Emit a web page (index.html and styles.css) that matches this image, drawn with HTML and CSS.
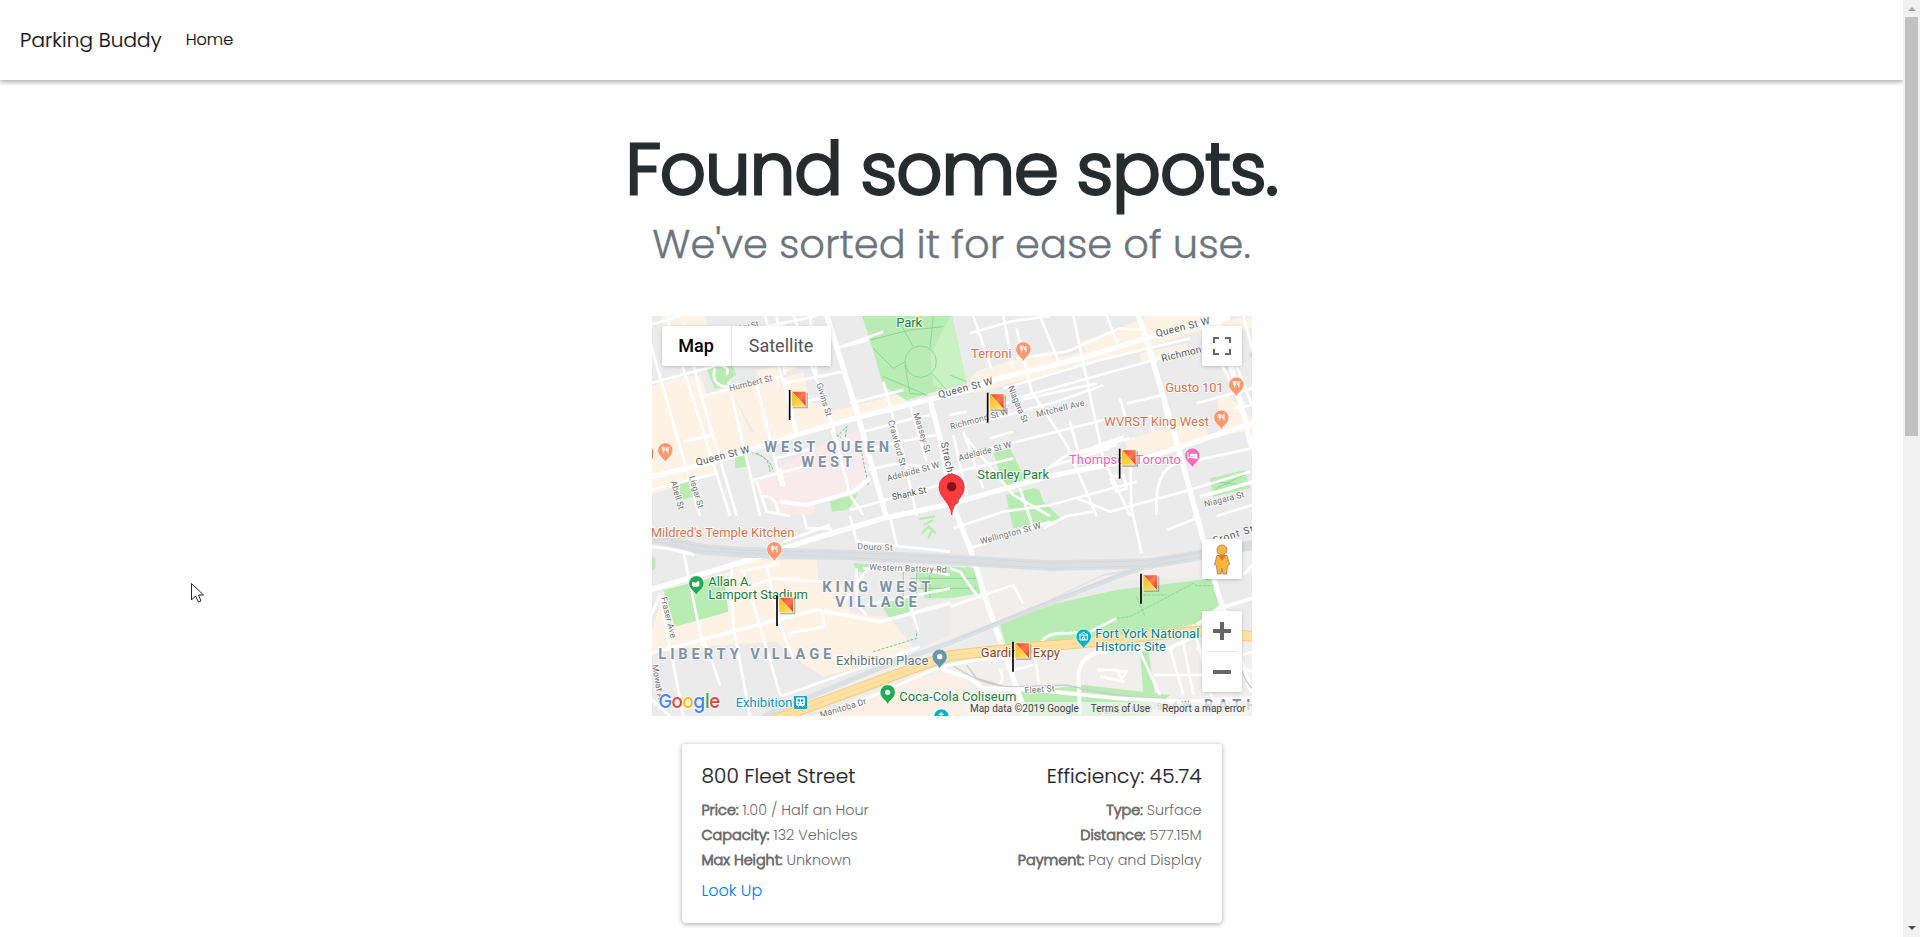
FILE: index.html
```html
<!DOCTYPE html>
<html lang="en">
  <head>
    <meta charset="utf-8">
    <title>Parking Buddy</title>
    <link rel="stylesheet" href="styles.css">
  </head>
  <body>
    <div class="page">
      <nav class="navbar">
        <a class="navbar-brand" href="#">Parking Buddy</a>
        <a class="nav-link" href="#">Home</a>
      </nav>
      <main class="results">
        <h1 class="title">Found some spots.</h1>
        <h2 class="subtitle">We've sorted it for ease of use.</h2>

        <div class="map">
          <svg class="map-tiles" viewBox="6 3 1800 1200">
            <defs>
              <linearGradient id="red" x1="0" y1="0" x2="1" y2="1">
                <stop offset="0" stop-color="#e8402c"/><stop offset=".5" stop-color="#ff7a50"/><stop offset="1" stop-color="#dc3a25"/>
              </linearGradient>
              <linearGradient id="yellow" x1="0" y1="0" x2="1" y2="1">
                <stop offset="0" stop-color="#f5b524"/><stop offset="1" stop-color="#ffe75c"/>
              </linearGradient>
              <g id="flag">
                <path d="M9 8h46v47H9z" fill="#777" opacity=".5"/>
                <path d="M5 3H50V50H5z" fill="#fff3d0"/>
                <path d="M8 5H48V49z" fill="url(#red)"/>
                <path d="M7 5V48H47z" fill="url(#yellow)"/>
                <path d="M0 0V90" stroke="#000" stroke-width="5"/>
              </g>
              <path id="pin" d="M0 0C-3-14-23-20-23-38a23 23 0 0 1 46 0C23-20 3-14 0 0z" stroke="#fff" stroke-width="2"/>
              <g id="food">
                <use href="#pin" fill="#ff9771"/>
                <path d="M-9-49v8q0 4 4 4t4-4v-8M-5-49v20M8-29v-19q-5 1-5 11h5" fill="none" stroke="#fff" stroke-width="3"/>
              </g>
            </defs>

            <rect x="6" y="3" width="1800" height="1200" fill="#ebebeb"/>

            <!-- land use -->
            <g fill="#fdf2e3">
              <path d="M0 215L90 185 190 480 0 540zM75 190L150 180 235 430 160 450zM150 250L240 225 320 385 225 415zM230 210L390 185 430 345 330 380zM320 165L380 155 395 190 330 200zM400 190L460 170 480 260 560 290 600 275 615 300 440 345zM30 3L165 3 175 30 40 30zM365 40L405 20 440 160 400 175z"/>
              <path d="M0 485L190 440 450 360 625 312 770 280 765 235 700 250 440 315 190 385 195 470 0 520z"/>
              <path d="M980 168L1070 140 1160 125 1200 105 1210 130 1310 110 1290 80 1350 60 1470 15 1490 3 1710 3 1720 25 1450 110 1310 145 970 235 960 190zM1424 375L1660 310 1675 365 1440 430zM1470 115L1610 85 1620 120 1475 140zM1700 250L1735 240 1806 310 1806 345 1720 360zM1640 30L1806 3V40L1650 70z"/>
              <path d="M290 735L500 735 505 795 570 800 600 890 720 910 800 1010 520 1085 450 1040 380 980 0 1005V965L45 820 240 770z"/>
            </g>
            <g fill="#f9eaec">
              <path d="M380 455L560 370 630 345 660 485 625 530 500 560 490 600H390L340 540 320 495z"/>
            </g>
            <path d="M900 765L1250 740 1806 700V780L1350 800 900 1000 400 1203H330L700 1050 900 960zM910 1040L1150 1000 1806 980V1203H500L780 1080z" fill="#f1efee"/>
            <path d="M480 1203L700 1120 920 1060 960 1110 940 1203z" fill="#fbefe7"/>

            <g fill="#b8ecb2">
              <path d="M635 0H905L950 205 880 222 770 256 700 212 660 75z"/>
              <path d="M170 165L245 140 258 180 235 195 240 208 195 222z"/>
              <path d="M255 425L285 410 290 455 255 460zM90 505L125 500 130 545 90 555zM540 560L625 535 605 570 590 585 545 590z"/>
              <path d="M1030 415L1080 400 1110 460 1140 508 1060 520 1045 460zM1067 540L1150 520 1168 525 1180 560 1235 612 1185 622 1090 640 1078 590z"/>
              <path d="M1680 490L1785 465 1800 520 1690 545z"/>
              <path d="M40 825L220 780 235 890 75 935zM610 745L660 748 650 770 620 770zM800 772L900 755 980 760 990 835 900 850 825 850zM705 860L775 850 780 890 720 910 700 880z"/>
              <path d="M1050 925L1220 865 1400 825 1690 790 1708 868 1640 925 1500 960 1350 960 1200 985 1070 1000z"/>
              <path d="M1110 1130L1300 1110 1560 1140 1490 1203H1130zM1470 1010L1495 1005 1515 1140 1480 1140zM950 755L970 760 990 830 965 830z"/>
              <path d="M1805 130V110L1795 120zM0 770V720L16 730V760z"/>
            </g>
            <path d="M900 4L905 0 950 205 880 222 850 210 840 120z" fill="#c8f2c2"/>
            <g fill="none" stroke="#86cf90" stroke-width="2.5">
              <circle cx="812" cy="140" r="47"/>
              <path d="M660 75L780 45 880 35M670 100L730 160 765 140M840 100L850 3M765 150L780 235 830 240M700 185L830 240M845 175L890 225M740 3L770 60 790 95M900 180L950 200"/>
              <path d="M1400 910L1440 905 1630 805 1640 812 1690 812M1460 845L1485 905M1480 840H1550" stroke-dasharray="10 3"/>
              <path d="M560 365L590 335 585 375 560 360M630 390L655 510M670 1010L800 970V945M320 415Q360 430 360 475M290 410Q360 420 370 470" stroke-dasharray="8 5" stroke="#55bd6c"/>
              <path d="M760 770V850M800 770V850M840 780V850M780 790H990M770 820H980M1700 520L1780 480M1700 500L1770 510"/>
            </g>
            <path d="M808 612L855 605M820 630L850 615M815 655L835 635 858 655M835 670L848 640" fill="none" stroke="#b8ecb2" stroke-width="7"/>

            <!-- side streets -->
            <g fill="none" stroke="#fff" stroke-width="8" stroke-linejoin="round">
              <path d="M0 80L100 430 150 603M50 3L240 603M100 20L150 230 260 603M235 200L330 603M320 210L395 515M345 3L440 350M380 3L405 180M430 0L545 320 600 540 640 600M480 3L500 190M560 100L700 50M580 95L655 75M400 205L580 170M430 265L510 250M600 265L760 225"/>
              <path d="M0 205L170 160 330 115M0 30L90 3M150 245L390 185M300 45L500 3M700 200L760 420 800 603M780 270L830 440M640 350L790 310 840 300M655 465L740 445 870 460M310 495L480 450 490 400 375 430M665 400L750 380 860 360M600 585L870 510"/>
              <path d="M320 500L350 590 420 603M340 545Q380 540 385 600M390 460L403 515M0 525L200 475M545 345L560 400M575 365L610 385M100 380L190 360M190 150Q245 150 230 180M195 160Q180 210 230 215"/>
              <path d="M970 3L1025 165M1060 3L1090 160M1100 40L1145 230 1250 390 1340 603M1170 3L1230 150M1270 3L1360 430 1440 603M1370 0L1400 80M960 55L1080 20 1200 3M1100 130L1250 110 1410 40 1480 45M1060 220L1350 135 1620 70M1100 250L1600 110M1040 270L1340 205M980 325L1220 260 1360 210M1020 400L1360 315M1180 470L1250 420 1440 370M1260 320L1290 430M1330 395L1420 365M1290 415L1400 390M1200 455L1380 400"/>
              <path d="M1110 520L1150 640M1280 550L1380 590 1600 530 1800 470M1380 485L1420 480 1430 520 1400 530 1380 490M1440 400L1445 603M1500 300L1510 350M1430 265L1540 240M1410 250L1430 320M1540 265L1560 340M1600 440Q1510 450 1520 600M1640 265L1806 220M1620 440L1806 400M1700 603L1806 570M1780 3L1806 100M1650 30L1780 270M1700 3L1806 270M1750 280L1806 270"/>
              <path d="M950 370L1090 540 1200 603M1020 370L1090 350M900 300L950 290M910 360L950 540M940 350L1000 520M900 475L1090 430M910 640L1060 590 1200 570 1460 500M1180 640L1250 603 1330 590M1440 560L1475 715M1550 645L1640 610M1630 600L1650 635M960 700L1200 620"/>
              <path d="M0 910L30 840 100 1203M0 660L130 720 100 710 160 1000M245 760L250 935 300 1203M280 765L350 1000 390 1140M350 755L390 930 430 1030M270 770L390 745M300 815L370 790 520 800M415 955L525 935 515 890M165 980L210 1110M0 695L50 700 130 720M460 600L470 640 540 640 545 665M600 603L620 680 900 710M720 603L740 690M540 630L400 680M650 870L900 820M655 760L570 875M640 760L820 765 900 780"/>
              <path d="M780 870L805 950M390 1145L810 995M0 1150L60 1203M620 760L620 870 650 900M900 875L1090 810 1120 865M980 840L930 770 900 760"/>
              <path d="M1165 1000Q1180 950 1250 955L1320 950 1400 910M1150 990L1170 1130M1600 985L1630 1140M1560 1000L1600 1140M1470 1010L1530 1140M1510 1080H1720M1340 1065H1400L1420 1100 1350 1085M1380 1065L1430 1070 1410 1100M1050 1060Q1070 1110 1030 1110M1090 1065L1150 1050M1630 930L1700 1203M1720 1040L1806 1010M1640 1000L1806 1070M1780 780L1806 750"/>
            </g>

            <!-- main streets -->
            <g fill="none" stroke="#fff" stroke-width="16" stroke-linejoin="round">
              <path d="M0 487L200 438 440 360 620 308 850 250 960 225 1040 192 1300 128 1480 72 1740 5"/>
              <path d="M0 825L290 737 500 668 700 610 900 567 1200 483 1500 425 1806 325"/>
              <path d="M530 0L625 305 710 610M840 255L870 370 905 560 960 700 1010 860 1100 1120 1130 1203"/>
              <path d="M1465 0L1500 110 1580 380 1640 600 1700 820 1760 1010 1806 1130M1690 3L1745 160 1806 400"/>
              <path d="M1640 930L1710 880 1806 850M1810 500L1650 545" stroke-width="11"/>
              <path d="M0 1015L380 915 500 885 690 920 900 865M400 190L440 360" stroke-width="11"/>
              <path d="M390 560L470 570 610 530 660 490M1290 1200L1285 1080Q1290 1010 1390 1005L1560 1000 1660 950" stroke-width="12"/>
            </g>

            <!-- rail lines -->
            <g fill="none" stroke="#dcdfe1">
              <path d="M0 670L60 678 150 702 280 712 600 720 900 734 1200 752 1500 745 1640 722 1806 690" stroke-width="32"/>
              <path d="M1810 695L1550 735 1400 785 1150 882 900 983 700 1055 340 1203" stroke-width="15"/>
              <path d="M1500 755L1360 780 1170 870" stroke-width="4"/>
            </g>
            <g fill="none" stroke="#cfd4d8" stroke-width="2">
              <path d="M0 662L150 694 280 706 600 712 900 726 1200 744 1500 737 1806 682M0 676L150 708 600 728 900 742 1200 760 1500 753 1806 700M1806 690L1550 730 1400 782 1150 877 900 980"/>
            </g>
            <path d="M900 1045Q1000 1120 1100 1115L1250 1110Q1400 1150 1550 1150M1750 1010L1790 1100 1806 1120M950 1050L980 1090 1100 1125" fill="none" stroke="#c8cccf" stroke-width="4"/>

            <!-- expressway -->
            <g fill="none" stroke-linejoin="round">
              <path d="M370 1215L600 1130 800 1056 900 1022 1100 1000 1300 984 1500 962 1650 948 1806 964" stroke="#f7cc78" stroke-width="32"/>
              <path d="M370 1215L600 1130 800 1056 900 1022 1100 1000 1300 984 1500 962 1650 948 1806 964" stroke="#ffe1a3" stroke-width="26"/>
              <path d="M370 1215L600 1130 800 1056 900 1022 1100 1000 1300 984 1500 962" stroke="#fad88e" stroke-width="3"/>
              <path d="M520 1203L700 1130 860 1060 900 1050 980 1035 1130 1025" stroke="#fff" stroke-width="9"/>
              <path d="M870 1060L960 1090 1000 1120 1160 1125 1400 1150 1600 1160 1806 1150" stroke="#fff" stroke-width="12"/>
            </g>

            <!-- street names -->
            <g class="street">
              <text x="240" y="229" textLength="132" transform="rotate(-14 240 229)">Humbert St</text>
              <text x="258" y="52" textLength="70" transform="rotate(-14 258 44)">xley St</text>
              <text x="499" y="207" textLength="103" transform="rotate(73 499 207)">Givins St</text>
              <text x="714" y="318" textLength="142" transform="rotate(75 714 318)">Crawford St</text>
              <text x="790" y="296" textLength="124" transform="rotate(73 790 296)">Massey St</text>
              <text x="62" y="500" textLength="88" transform="rotate(74 62 500)">Abell St</text>
              <text x="117" y="485" textLength="100" transform="rotate(74 117 485)">Lisgar St</text>
              <text x="713" y="499" textLength="162" transform="rotate(-15 713 499)">Adelaide St W</text>
              <text x="728" y="555" textLength="105" transform="rotate(-12 728 555)" fill="#444">Shank St</text>
              <text x="903" y="344" textLength="180" transform="rotate(-15 903 344)">Richmond St W</text>
              <text x="1073" y="217" textLength="118" transform="rotate(67 1073 217)">Niagara St</text>
              <text x="1161" y="307" textLength="148" transform="rotate(-14 1161 307)">Mitchell Ave</text>
              <text x="928" y="438" textLength="163" transform="rotate(-15 928 438)">Adelaide St W</text>
              <text x="1665" y="576" textLength="123" transform="rotate(-14 1665 576)">Niagara St</text>
              <text x="622" y="703" textLength="106" transform="rotate(2 622 703)">Douro St</text>
              <text x="658" y="765" textLength="232" transform="rotate(2 658 765)">Western Battery Rd</text>
              <text x="993" y="688" textLength="188" transform="rotate(-15 993 688)">Wellington St W</text>
              <text x="32" y="848" textLength="126" transform="rotate(76 32 848)">Fraser Ave</text>
              <text x="6" y="1050" textLength="105" transform="rotate(80 6 1050)">Mowat A</text>
              <text x="513" y="1208" textLength="144" transform="rotate(-17 513 1208)">Manitoba Dr</text>
              <text x="1124" y="1135" textLength="91" transform="rotate(-4 1124 1135)">Fleet St</text>
              <text x="1345" y="1199" textLength="275" transform="rotate(-5 1345 1199)">Lake Shore Blvd W</text>
            </g>
            <g class="street street-main">
              <text x="140" y="452" textLength="165" transform="rotate(-14 140 452)">Queen St W</text>
              <text x="868" y="250" textLength="168" transform="rotate(-15 868 250)">Queen St W</text>
              <text x="1520" y="66" textLength="166" transform="rotate(-14 1520 66)">Queen St W</text>
              <text x="1537" y="141" textLength="140" transform="rotate(-14 1537 141)">Richmond</text>
              <text x="872" y="383" textLength="190" transform="rotate(78 872 383)">Strachan Ave</text>
              <text x="1693" y="687" textLength="125" transform="rotate(-17 1693 687)">Front St</text>
            </g>

            <!-- districts -->
            <g class="district">
              <text x="343" y="411" textLength="374">WEST QUEEN</text>
              <text x="454" y="456" textLength="152">WEST</text>
              <text x="517" y="832" textLength="324">KING WEST</text>
              <text x="556" y="877" textLength="244">VILLAGE</text>
              <text x="25" y="1032" textLength="519">LIBERTY VILLAGE</text>
              <text x="1662" y="1184" textLength="158">BATH</text>
            </g>

            <!-- places -->
            <g class="place">
              <g fill="#dd744f">
                <text x="963" y="128" textLength="122">Terroni</text>
                <text x="1546" y="232" textLength="175">Gusto 101</text>
                <text x="1363" y="332" textLength="314">WVRST King West</text>
                <text x="2" y="665" textLength="431">Mildred's Temple Kitchen</text>
              </g>
              <path d="M6 403h3v27H6z" fill="#dd744f"/>
              <text x="1257" y="446" textLength="336" fill="#f068b4">Thompson Toronto</text>
              <g fill="#18823a">
                <text x="739" y="35" textLength="77">Park</text>
                <text x="982" y="493" textLength="215">Stanley Park</text>
                <text x="175" y="812" textLength="130">Allan A.</text>
                <text x="175" y="851" textLength="299">Lamport Stadium</text>
                <text x="748" y="1157" textLength="351">Coca-Cola Coliseum</text>
              </g>
              <text x="558" y="1050" textLength="277" fill="#5b7684">Exhibition Place</text>
              <text x="257" y="1175" textLength="170" fill="#0098c9">Exhibition</text>
              <g fill="#00838f">
                <text x="1336" y="968" textLength="312">Fort York National</text>
                <text x="1336" y="1007" textLength="212">Historic Site</text>
              </g>
              <text x="992" y="1026" textLength="238" fill="#8f4a1c">Gardiner Expy</text>
            </g>
            <use href="#food" x="46" y="444"/>
            <use href="#food" x="1120" y="141"/>
            <use href="#food" x="1759" y="247"/>
            <use href="#food" x="1714" y="346"/>
            <use href="#food" x="373" y="741"/>
            <use href="#pin" x="1627" y="460" fill="#f56fb8"/>
            <path d="M1614 411v21M1614 427h27v5M1622 424v-6h18v8" fill="#fff" stroke="#fff" stroke-width="3"/>
            <use href="#pin" x="139" y="843" fill="#21ab55"/>
            <path d="M126 800q8 0 12 4l4-5h6v14q-14 6-22-1z" fill="#fff"/>
            <use href="#pin" x="713" y="1170" fill="#21ab55"/>
            <circle cx="713" cy="1132" r="8" fill="#fff"/>
            <use href="#pin" x="869" y="1063" fill="#6b98a6"/>
            <circle cx="869" cy="1025" r="8" fill="#fff"/>
            <use href="#pin" x="874" y="1243" fill="#00b0c4"/>
            <path d="M874 1190v14M866 1198h16" stroke="#fff" stroke-width="4"/>
            <use href="#pin" x="1301" y="1003" fill="#00b3c5"/>
            <path d="M1288 960l13-8 13 8zM1290 961v14h22v-14M1298 975v-9h6v9" fill="none" stroke="#fff" stroke-width="3"/>
            <rect x="432" y="1143" width="39" height="39" rx="3" fill="#00a9d8"/>
            <path d="M440 1149h23v22h-23zM444 1177l4-6M459 1177l-4-6" fill="#fff" stroke="#fff" stroke-width="3"/>
            <path d="M443 1153h7v7h-7zM453 1153h7v7h-7zM443 1164h4v3h-4zM456 1164h4v3h-4z" fill="#00a9d8"/>

            <text class="logo" x="26" y="1179" textLength="184" lengthAdjust="spacingAndGlyphs"><tspan fill="#4285f4">G</tspan><tspan fill="#ea4335">o</tspan><tspan fill="#fbbc05">o</tspan><tspan fill="#4285f4">g</tspan><tspan fill="#34a853">l</tspan><tspan fill="#ea4335">e</tspan></text>

            <!-- parking spots -->
            <use href="#flag" x="419" y="225"/>
            <use href="#flag" x="1013" y="233"/>
            <use href="#flag" x="1409" y="401"/>
            <use href="#flag" x="381" y="843"/>
            <use href="#flag" x="1473" y="776"/>
            <use href="#flag" x="1089" y="980"/>
            <path d="M905 600C901 560 867 548 867 516a38 38 0 0 1 76 0C943 548 909 560 905 600z" fill="#fc3b40" stroke="#d72c31" stroke-width="2"/>
            <circle cx="905" cy="515" r="14" fill="#7c1418"/>
          </svg>

          <div class="map-type">
            <button class="map-btn active">Map</button>
            <button class="map-btn">Satellite</button>
          </div>
          <button class="map-control fullscreen">
            <svg width="18" height="18" viewBox="0 0 18 18"><path d="M1 6V1H6M12 1h5V6M17 12v5H12M6 17H1V12" fill="none" stroke="#666" stroke-width="2"/></svg>
          </button>
          <button class="map-control pegman">
            <svg width="18" height="31" viewBox="0 0 18 31">
              <path d="M4 11.500h10l2.500 9-2 1-1 8.500h-3.500l-1-6-1 6H4.500l-1-8.500-2-1z" fill="#fdb63c" stroke="#a88d63"/>
              <path d="M5 11h8l-4 6z" fill="#e8762d"/>
              <circle cx="9" cy="6" r="5" fill="#fdb63c" stroke="#a88d63"/>
            </svg>
          </button>
          <div class="map-control zoom">
            <svg width="18" height="18" viewBox="0 0 18 18"><path d="M0 9h18M9 0v18" stroke="#666" stroke-width="4"/></svg>
            <span class="zoom-line"></span>
            <svg width="18" height="18" viewBox="0 0 18 18"><path d="M0 9h18" stroke="#666" stroke-width="4"/></svg>
          </div>
          <div class="map-terms">
            <span>Map data ©2019 Google</span>
            <span>Terms of Use</span>
            <span>Report a map error</span>
          </div>
        </div>

        <div class="card">
          <div class="card-col">
            <h5 class="card-title">800 Fleet Street</h5>
            <p class="card-text"><b>Price:</b> 1.00 / Half an Hour</p>
            <p class="card-text"><b>Capacity:</b> 132 Vehicles</p>
            <p class="card-text"><b>Max Height:</b> Unknown</p>
            <a class="card-link" href="#">Look Up</a>
          </div>
          <div class="card-col right">
            <h5 class="card-title">Efficiency: 45.74</h5>
            <p class="card-text"><b>Type:</b> Surface</p>
            <p class="card-text"><b>Distance:</b> 577.15M</p>
            <p class="card-text"><b>Payment:</b> Pay and Display</p>
          </div>
        </div>
      </main>
    </div>

    <div class="scrollbar">
      <span class="arrow up"></span>
      <span class="thumb"></span>
      <span class="arrow down"></span>
    </div>
    <svg class="cursor" width="13" height="20" viewBox="0 0 13 20"><path d="M.5 .5V17l4-4 3 6 2.500-1-2.500-6h5z" fill="#fff" stroke="#223"/></svg>
  </body>
</html>
```
FILE: styles.css
```css
* {
    box-sizing: border-box;
}

body {
    margin: 0;
    height: 937px;
    display: flex;
    overflow: hidden;
    background: #fff;
    color: #212529;
    font-family: Poppins, Inter, sans-serif;
    font-weight: 300;
}

a {
    text-decoration: none;
}

.page {
    flex: 1;
}

/* navbar */
.navbar {
    display: flex;
    align-items: center;
    height: 80px;
    padding: 0 20px 1px;
    box-shadow: 0 2px 5px rgba(0, 0, 0, 0.35);
    -webkit-text-stroke: 0.2px;
}
.navbar-brand {
    font-size: 20px;
    letter-spacing: 0.1px;
    color: #111;
    margin-right: 24px;
}
.nav-link {
    font-size: 16px;
    color: #111;
}

/* headings */
.results {
    display: flex;
    flex-direction: column;
    align-items: center;
    padding-top: 49px;
}
.title {
    margin: 0;
    font-size: 72px;
    line-height: 80px;
    font-weight: 300;
    letter-spacing: -1px;
    -webkit-text-stroke: 2.8px;
    color: #272c2e;
    white-space: nowrap;
}
.subtitle {
    margin: 10px 0 0;
    font-size: 40px;
    line-height: 50px;
    font-weight: 300;
    -webkit-text-stroke: 0.4px;
    color: #6c757d;
    white-space: nowrap;
}

/* map */
.map {
    position: relative;
    width: 600px;
    height: 400px;
    margin-top: 47px;
    overflow: hidden;
    font-family: Roboto, sans-serif;
}
.map-tiles {
    display: block;
    width: 600px;
    height: 400px;
    font-weight: 400;
}
.map-tiles text {
    paint-order: stroke;
    stroke: #fff;
    stroke-width: 6px;
    stroke-linejoin: round;
    stroke-opacity: 0.8;
}
.street {
    font-size: 26px;
    fill: #707070;
}
.street-main {
    font-size: 30px;
    fill: #50585c;
}
.district {
    font-size: 44px;
    font-weight: 700;
    fill: #7d91a7;
}
.place {
    font-size: 39px;
}
.map-tiles .logo {
    font-family: Poppins, Lato, sans-serif;
    font-size: 60px;
    font-weight: 500;
}
.map-type,
.map-control {
    position: absolute;
    display: flex;
    background: #fff;
    border: 0;
    border-radius: 2px;
    box-shadow: 0 1px 4px -1px rgba(0, 0, 0, 0.3);
}
.map-type {
    left: 10px;
    top: 10px;
    width: 169px;
    height: 40px;
}
.map-btn {
    flex: 1;
    padding: 0 0 1px;
    border: 0;
    background: none;
    font-family: Roboto, sans-serif;
    font-size: 18px;
    color: #565656;
}
.map-btn.active {
    flex: 0 0 70px;
    border-right: 1px solid #e6e6e6;
    font-weight: 500;
    color: #000;
}
.map-control {
    right: 10px;
    width: 40px;
    height: 40px;
    padding: 0;
    align-items: center;
    justify-content: center;
}
.fullscreen {
    top: 10px;
}
.pegman {
    top: 223px;
}
.zoom {
    top: 295px;
    height: 81px;
    flex-direction: column;
    justify-content: space-between;
    padding: 11px 0;
}
.zoom-line {
    width: 30px;
    height: 1px;
    background: #e6e6e6;
}
.map-terms {
    position: absolute;
    right: 0;
    bottom: 0;
    display: flex;
    gap: 12px;
    height: 14px;
    padding: 0 6px;
    background: rgba(245, 245, 245, 0.7);
    font-size: 10px;
    line-height: 14px;
    font-weight: 400;
    color: #444;
    white-space: nowrap;
}

/* spot card */
.card {
    display: flex;
    justify-content: space-between;
    width: 540px;
    height: 179px;
    margin-top: 28px;
    padding: 20px;
    border-radius: 4px;
    box-shadow: 0 1px 5px rgba(0, 0, 0, 0.35);
}
.card-title {
    margin: 0 0 10px;
    font-size: 20px;
    line-height: 24px;
    font-weight: 300;
    letter-spacing: 0.1px;
    -webkit-text-stroke: 0.2px;
}
.card-text {
    margin: 0;
    font-size: 14.4px;
    line-height: 25px;
    color: #6b6b6b;
}
.card-text b {
    font-weight: 300;
    -webkit-text-stroke: 0.8px;
}
.card-link {
    display: block;
    margin-top: 6px;
    font-size: 16px;
    line-height: 24px;
    color: #007bff;
}
.right {
    text-align: right;
}

/* scrollbar */
.scrollbar {
    display: flex;
    flex-direction: column;
    align-items: center;
    width: 17px;
    background: #f1f1f1;
}
.arrow {
    border: 4px solid transparent;
}
.up {
    margin-top: 3px;
    border-bottom-color: #a3a3a3;
}
.thumb {
    width: 13px;
    height: 419px;
    margin-top: 6px;
    background: #c1c1c1;
}
.down {
    margin-top: auto;
    margin-bottom: 3px;
    border-top-color: #505050;
}

.cursor {
    position: absolute;
    left: 191px;
    top: 583px;
}
```
